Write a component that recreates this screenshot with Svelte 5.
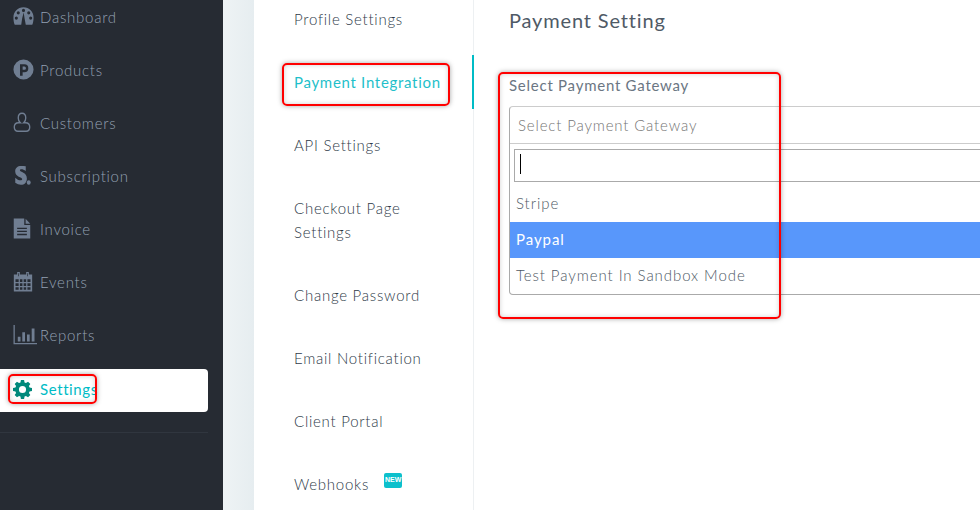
<script>
  const nav = [
    { id: "dashboard", label: "Dashboard" },
    { id: "products", label: "Products" },
    { id: "customers", label: "Customers" },
    { id: "subscription", label: "Subscription" },
    { id: "invoice", label: "Invoice" },
    { id: "events", label: "Events" },
    { id: "reports", label: "Reports" },
    { id: "settings", label: "Settings", active: true }
  ];

  const tabs = [
    { label: "Profile Settings" },
    { label: "Payment Integration", active: true },
    { label: "API Settings" },
    { label: "Checkout Page Settings" },
    { label: "Change Password" },
    { label: "Email Notification" },
    { label: "Client Portal" },
    { label: "Webhooks", isNew: true }
  ];

  const options = ["Stripe", "Paypal", "Test Payment In Sandbox Mode"];
</script>

<div class="page">
  <aside class="sidebar">
    <ul class="nav">
      {#each nav as item}
        <li class="nav-item" class:active={item.active}>
          <span class="icon-slot">
            <svg class="icon icon-{item.id}" viewBox="0 0 24 24" preserveAspectRatio="none" aria-hidden="true">
              {#if item.id === "dashboard"}
                <path fill-rule="evenodd" d="M12 1.500C5.400 1.500.5 6.700.5 13c0 3 .4 5.800 1.500 8.500h7.400l1.100-7.500 1.700-6.500 1 6.500 1.400 7.500H22c1.100-2.700 1.500-5.500 1.500-8.500C23.500 6.700 18.600 1.500 12 1.500zM6 6a1.800 1.800 0 1 1 0 3.600A1.800 1.800 0 0 1 6 6zM12 3.200a1.800 1.800 0 1 1 0 3.600 1.800 1.800 0 0 1 0-3.600zM18 6a1.800 1.800 0 1 1 0 3.600A1.800 1.800 0 0 1 18 6zM3.800 12a1.800 1.800 0 1 1 0 3.600 1.800 1.800 0 0 1 0-3.600zM20.200 12a1.800 1.800 0 1 1 0 3.600 1.800 1.800 0 0 1 0-3.600z"/>
              {:else if item.id === "products"}
                <path fill-rule="evenodd" d="M12 .5a11.500 11.500 0 1 0 0 23 11.500 11.500 0 0 0 0-23zM8 6h5a4.500 4.500 0 0 1 0 9h-2v4H8zM11 8.700v3.600h2a1.800 1.800 0 0 0 0-3.600z"/>
              {:else if item.id === "customers"}
                <path class="line" d="M12 1.500c3 0 5 2.300 5 5.400 0 2.300-1 4.100-2.600 5.300h2.100c3.500 0 5.800 2 5.800 5 0 3-1.800 4.800-4.800 4.800H6.500c-3 0-4.800-1.800-4.800-4.800 0-3 2.300-5 5.800-5h2.100C8 11 7 9.200 7 6.900 7 3.800 9 1.500 12 1.500z"/>
              {:else if item.id === "subscription"}
                <path d="M17 1.500v5.300c-2-1.300-4-2-5.800-2-1.300 0-2 .5-2 1.200 0 2.400 9.300 2 9.300 9.300 0 4.700-3.300 7.200-8 7.200-2.700 0-5-.7-7.500-2.200v-5.800c2 1.800 4.700 3 7 3 1.500 0 2.300-.6 2.300-1.500C12.300 13.500 2.900 14 2.900 7 2.900 3.200 6 1 10.800 1c2.200 0 4.300.2 6.200.5z"/>
                <circle cx="21" cy="20" r="2.600"/>
              {:else if item.id === "invoice"}
                <path fill-rule="evenodd" d="M1 .5h14v7.500h8v15.500H1zM5.500 11v1.600h13V11zM5.500 14.500v1.600h13v-1.600zM5.500 18v1.600h13V18z"/>
                <path d="M16.800 .8 23 6.600h-6.200z"/>
              {:else if item.id === "events"}
                <path fill-rule="evenodd" d="M5 1h3.200v3h7.600V1H19v3h4v19.500H1V4h4zM6.200 2.500v3.500h.8V2.500zM17 2.500v3.500h.8V2.500zM3 9.500v3h3.800v-3zM8.300 9.500v3h3v-3zM12.800 9.500v3h3v-3zM17.300 9.500v3H21v-3zM3 14v3h3.800v-3zM8.300 14v3h3v-3zM12.800 14v3h3v-3zM17.300 14v3H21v-3zM3 18.500v3h3.800v-3zM8.300 18.500v3h3v-3zM12.800 18.500v3h3v-3zM17.300 18.500v3H21v-3z"/>
              {:else if item.id === "reports"}
                <path d="M.5 1h1.300v20.800H24V23H.5z"/>
                <path d="M4.800 14.500h2.700V20H4.800zM9.300 9.500H12V20H9.300zM14 12h2.700v8H14zM18.700 5h2.800v15h-2.800z"/>
              {:else}
                <path fill-rule="evenodd" d="M10 0h4l.6 3.100 1.800.8L19 2.100 21.900 5l-1.800 2.600.8 1.800L24 10v4l-3.100.6-.8 1.800 1.800 2.600-2.900 2.900-2.600-1.800-1.800.8L14 24h-4l-.6-3.100-1.800-.8L5 21.900 2.100 19l1.800-2.600-.8-1.800L0 14v-4l3.100-.6.800-1.800L2.100 5 5 2.100l2.600 1.800 1.800-.8zM12 7.500a4.500 4.500 0 1 0 0 9 4.500 4.500 0 0 0 0-9z"/>
              {/if}
            </svg>
          </span>
          <span>{item.label}</span>
        </li>
      {/each}
    </ul>
    <div class="divider"></div>
  </aside>

  <div class="gutter"></div>

  <nav class="tabs">
    {#each tabs as tab}
      <div class="tab" class:active={tab.active}>
        <span class="tab-label">{tab.label}</span>
        {#if tab.isNew}<span class="new">NEW</span>{/if}
      </div>
    {/each}
  </nav>

  <main class="content">
    <h1>Payment Setting</h1>
    <label for="gateway-search">Select Payment Gateway</label>
    <div class="select">
      <div class="placeholder">Select Payment Gateway</div>
      <div class="search"><input id="gateway-search" type="text" /><i class="caret"></i></div>
      {#each options as opt, i}
        <div class="option" class:highlighted={i === 1}>{opt}</div>
      {/each}
    </div>
  </main>

  <div class="mark mark-settings"></div>
  <div class="mark mark-tab"></div>
  <div class="mark mark-select"></div>
</div>

<style>
  :global(body) {
    margin: 0;
    background: #fff;
    overflow: hidden;
  }

  .page {
    position: relative;
    display: flex;
    height: 510px;
    width: 980px;
    overflow: hidden;
    font-family: Lato, "Open Sans", sans-serif;
    font-size: 15px;
    font-weight: 300;
    letter-spacing: 0.75px;
  }

  .sidebar {
    width: 223px;
    flex: none;
    background: #262b33;
  }

  .nav {
    display: flex;
    flex-direction: column;
    list-style: none;
    margin: -5px 0 0;
    padding: 0;
  }

  .nav-item {
    display: flex;
    align-items: center;
    width: 208px;
    height: 43px;
    margin-bottom: 10px;
    padding-left: 13px;
    box-sizing: border-box;
    color: #93a0b2;
    border-radius: 0 4px 4px 0;
  }

  .nav-item.active {
    margin-top: 3px;
    margin-bottom: 0;
    padding-bottom: 3px;
    background: #fff;
    color: #00bcc6;
    font-weight: 400;
    letter-spacing: 0.6px;
  }

  .icon-slot {
    display: flex;
    align-items: center;
    width: 27px;
    flex: none;
  }

  .icon {
    width: 21px;
    height: 21px;
    flex: none;
    fill: #707e92;
    overflow: visible;
  }

  .icon-customers,
  .icon-subscription,
  .icon-invoice {
    width: 18px;
  }

  .icon-events {
    width: 20px;
  }

  .icon-reports {
    width: 24px;
  }

  .icon-settings {
    width: 19px;
    height: 19px;
  }

  .nav-item.active .icon {
    fill: #00897b;
  }

  .line {
    fill: none;
    stroke: #707e92;
    stroke-width: 1.800;
  }

  .divider {
    width: 208px;
    height: 1px;
    margin-top: 20px;
    background: #30363f;
  }

  .gutter {
    width: 31px;
    flex: none;
    background: linear-gradient(90deg, #eef3f5, #e6edf0);
  }

  .tabs {
    width: 220px;
    flex: none;
    padding-top: 7px;
    box-sizing: border-box;
    border-right: 1px solid #edf0f2;
    color: #2e3a48;
  }

  .tab {
    position: relative;
    display: flex;
    align-items: flex-start;
    padding: 0 30px 39px 40px;
    line-height: 24px;
  }

  .tab.active {
    color: #1fbfca;
    font-weight: 400;
    letter-spacing: 0.7px;
  }

  .tab.active::after {
    content: "";
    position: absolute;
    right: -1px;
    top: -15px;
    width: 2px;
    height: 54px;
    background: #00bcc6;
  }

  .new {
    margin: 1px 0 0 15px;
    width: 18px;
    height: 15px;
    flex: none;
    background: #0cc0cc;
    border-radius: 2px;
    color: #fff;
    font-size: 7px;
    font-weight: 900;
    line-height: 13px;
    text-align: center;
    letter-spacing: 0;
    font-family: "Liberation Sans", sans-serif;
  }

  .content {
    flex: 1;
    min-width: 0;
    padding-left: 35px;
    color: #6b7683;
  }

  h1 {
    margin: 6px 0 0;
    font-size: 20px;
    font-weight: 400;
    line-height: 28px;
    color: #4f5a66;
    letter-spacing: 0.85px;
  }

  label {
    display: block;
    margin-top: 39px;
    line-height: 24px;
    font-weight: 400;
  }

  .select {
    width: 560px;
    margin-top: 9px;
    box-sizing: border-box;
    border: 1px solid #aaa;
    border-top-color: #ccc;
    border-radius: 4px;
  }

  .placeholder {
    height: 36px;
    padding-left: 8px;
    line-height: 37px;
    color: #757575;
    letter-spacing: 0.85px;
    border-bottom: 1px solid #ccc;
  }

  .search {
    position: relative;
    padding: 5px 4px 4px;
  }

  .search input {
    display: block;
    width: 100%;
    height: 33px;
    box-sizing: border-box;
    border: 1px solid #aaa;
    background: #fff;
    outline: none;
  }

  .caret {
    position: absolute;
    left: 10px;
    top: 10px;
    width: 1px;
    height: 20px;
    background: #000;
  }

  .option {
    height: 36px;
    padding-left: 6px;
    line-height: 35px;
    color: #4e5965;
    letter-spacing: 0.93px;
  }

  .option.highlighted {
    background: #5897fb;
    color: #fff;
    font-weight: 400;
  }

  .mark {
    position: absolute;
    box-sizing: border-box;
    border: 2px solid #f00;
    border-radius: 5px;
    box-shadow: 0 0 5px rgba(0, 0, 0, 0.35), inset 0 0 5px rgba(0, 0, 0, 0.18);
    pointer-events: none;
  }

  .mark-settings {
    left: 8px;
    top: 374px;
    width: 89px;
    height: 30px;
  }

  .mark-tab {
    left: 282px;
    top: 63px;
    width: 168px;
    height: 43px;
  }

  .mark-select {
    left: 498px;
    top: 72px;
    width: 283px;
    height: 247px;
  }
</style>
